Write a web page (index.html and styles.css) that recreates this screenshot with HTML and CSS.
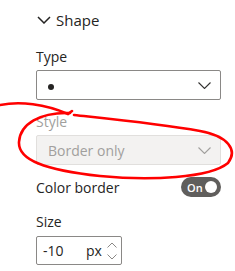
FILE: index.html
```html
<!DOCTYPE html>
<html lang="en">
<head>
    <meta charset="UTF-8">
    <title>Shape</title>
    <link rel="stylesheet" href="styles.css">
</head>
<body>
    <div class="pane">
        <div class="section-head">
            <svg class="caret" width="14" height="8" viewBox="0 0 14 8"><path d="M1 1 L7 7 L13 1" fill="none" stroke="#252423" stroke-width="1.5"/></svg>
            <span>Shape</span>
        </div>

        <div class="field-label label-type">Type</div>
        <div class="dropdown">
            <span class="dot"></span>
            <svg class="drop-caret" width="13" height="7" viewBox="0 0 13 7"><path d="M0.5 0.5 L6.5 6.5 L12.5 0.5" fill="none" stroke="#323130" stroke-width="1.1"/></svg>
        </div>

        <div class="field-label label-style disabled-text">Style</div>
        <div class="dropdown disabled">
            <span class="value">Border only</span>
            <svg class="drop-caret" width="13" height="7" viewBox="0 0 13 7"><path d="M0.5 0.5 L6.5 6.5 L12.5 0.5" fill="none" stroke="#a19f9d" stroke-width="1.1"/></svg>
        </div>

        <div class="toggle-row">
            <span>Color border</span>
            <div class="toggle">
                <span class="toggle-text">On</span>
                <span class="knob"></span>
            </div>
        </div>

        <div class="field-label label-size">Size</div>
        <div class="spinner">
            <span class="num">-10</span>
            <span class="unit">px</span>
            <div class="arrows">
                <svg width="10" height="6" viewBox="0 0 10 6"><path d="M0.5 5.5 L5 1 L9.5 5.5" fill="none" stroke="#8a8886" stroke-width="1"/></svg>
                <svg width="10" height="6" viewBox="0 0 10 6"><path d="M0.5 0.5 L5 5 L9.5 0.5" fill="none" stroke="#8a8886" stroke-width="1"/></svg>
            </div>
        </div>
    </div>

    <!-- hand-drawn red marking over the Style field -->
    <svg class="scribble" width="235" height="271" viewBox="0 0 235 271">
        <path d="M0 105 C20 101 45 104 68 114 L72 111" fill="none" stroke="#f00" stroke-width="2.6" stroke-linecap="round"/>
        <path d="M70 113 C40 112 20 124 19 142 C18 160 45 170 100 176 C150 181 210 178 228 163 C238 150 228 136 200 131 C160 124 120 120 74 115" fill="none" stroke="#f00" stroke-width="2.6" stroke-linecap="round"/>
    </svg>
</body>
</html>
```

FILE: styles.css
```css
body {
    margin: 0;
    font-family: "Open Sans", "Noto Sans", sans-serif;
    font-size: 13px;
    color: #252423;
    background: #fff;
}
.pane {
    width: 185px;
    padding: 10px 0 0 36px;
}
.section-head {
    display: flex;
    align-items: center;
    height: 20px;
    font-size: 15px;
    gap: 5px;
}
.caret {
    margin-left: 1px;
}
.field-label {
    height: 20px;
    line-height: 20px;
    font-size: 14px;
}
.label-type {
    margin-top: 17px;
}
.label-style {
    margin-top: 12px;
}
.label-size {
    margin-top: 15px;
}
.disabled-text {
    color: #a19f9d;
}
.dropdown {
    margin-top: 3px;
    height: 30px;
    box-sizing: border-box;
    border: 1px solid #8a8886;
    border-radius: 2px;
    display: flex;
    align-items: center;
    justify-content: space-between;
    padding: 0 9px 0 11px;
    font-size: 14px;
}
.dropdown.disabled {
    background: #f3f2f1;
    border-color: #e1dfdd;
    color: #a19f9d;
}
.dot {
    width: 6px;
    height: 6px;
    border-radius: 50%;
    background: #252423;
    margin-top: 3px;
}
.drop-caret {
    display: block;
}
.toggle-row {
    margin-top: 12px;
    height: 20px;
    display: flex;
    align-items: center;
    justify-content: space-between;
    font-size: 14px;
}
.toggle {
    width: 40px;
    height: 20px;
    border-radius: 10px;
    background: #605e5c;
    display: flex;
    align-items: center;
    box-sizing: border-box;
    padding: 0 4px 0 6px;
    justify-content: space-between;
}
.toggle-text {
    color: #fff;
    font-size: 11px;
    font-weight: 600;
}
.knob {
    width: 12px;
    height: 12px;
    border-radius: 50%;
    background: #fff;
}
.spinner {
    margin-top: 4px;
    width: 86px;
    height: 29px;
    box-sizing: border-box;
    border: 1px solid #8a8886;
    border-radius: 2px;
    display: flex;
    align-items: center;
    padding: 0 4px 0 6px;
    font-size: 14px;
}
.num {
    width: 43px;
}
.unit {
    width: 21px;
}
.arrows {
    display: flex;
    flex-direction: column;
    gap: 6px;
}
.arrows svg {
    display: block;
}
.scribble {
    position: absolute;
    left: 0;
    top: 0;
    pointer-events: none;
}
```
